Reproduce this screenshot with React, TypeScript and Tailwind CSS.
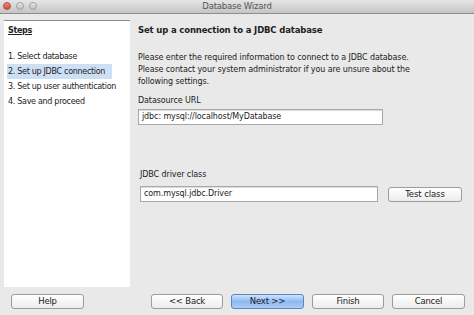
// Database Wizard dialog, Mac OS X style

import React from 'react'

const steps = [
  '1. Select database',
  '2. Set up JDBC connection',
  '3. Set up user authentication',
  '4. Save and proceed',
]

function MacButton({
  label,
  primary,
  className,
}: {
  label: string
  primary?: boolean
  className?: string
}) {
  return (
    <button
      className={
        'h-[15px] rounded-[3px] border text-[8.5px] leading-none text-[#222] ' +
        (primary
          ? 'border-[#5b86c4] bg-gradient-to-b from-[#cfe4fb] via-[#8dbaf0] to-[#a9cdf6] '
          : 'border-[#9c9c9c] bg-gradient-to-b from-[#ffffff] to-[#ececec] ') +
        (className ?? '')
      }
    >
      {label}
    </button>
  )
}

export default function App() {
  return (
    <div
      className="w-[474px] h-[315px] flex flex-col bg-[#e9e9e9] text-[#222] overflow-hidden"
      style={{ fontFamily: '"DejaVu Sans", Verdana, sans-serif' }}
    >
      {/* Title bar */}
      <div className="relative h-[14px] flex items-center justify-center bg-gradient-to-b from-[#e6e6e6] to-[#c4c4c4] border-b border-[#8e8e8e]">
        <div className="absolute left-[3px] top-[2px] flex gap-[5px]">
          <span className="w-[8px] h-[8px] rounded-full bg-gradient-to-b from-[#f08a80] to-[#d0453a] border border-[#b84a40]" />
          <span className="w-[8px] h-[8px] rounded-full bg-gradient-to-b from-[#e8e8e8] to-[#bdbdbd] border border-[#a0a0a0]" />
          <span className="w-[8px] h-[8px] rounded-full bg-gradient-to-b from-[#e8e8e8] to-[#bdbdbd] border border-[#a0a0a0]" />
        </div>
        <span className="text-[8.5px] text-[#555] tracking-[-0.2px]">Database Wizard</span>
      </div>

      {/* Body */}
      <div className="flex flex-1 pt-[6px]">
        {/* Steps panel */}
        <div className="ml-[4px] w-[126px] h-[267px] bg-white border-t border-[#8a8a8a] pl-[3px] pt-[4px] text-[8px] tracking-[-0.3px]">
          <div className="font-bold underline leading-[12px] mb-[12px] pl-[1px]">Steps</div>
          <div className="flex flex-col">
            {steps.map((s, i) => (
              <div
                key={i}
                className={
                  'h-[15px] leading-[15px] pl-[1px] ' +
                  (i === 1 ? 'bg-[#cddff4] w-[105px]' : '')
                }
              >
                {s}
              </div>
            ))}
          </div>
        </div>

        {/* Main content */}
        <div className="flex-1 pl-[8px] pt-[4px] pr-[10px] text-[8px] tracking-[-0.1px]">
          <div className="font-bold leading-[12px] text-[8.5px] tracking-[-0.15px]">Set up a connection to a JDBC database</div>
          <p className="mt-[16px] leading-[12px]">
            Please enter the required information to connect to a JDBC database.
            <br />
            Please contact your system administrator if you are unsure about the
            <br />
            following settings.
          </p>
          <div className="mt-[7px] leading-[12px]">Datasource URL</div>
          <div className="mt-[2px] w-[245px] h-[16px] bg-white border border-[#a8a8a8] shadow-[inset_0_1px_1px_rgba(0,0,0,0.15)] flex items-center pl-[3px]">
            jdbc: mysql://localhost/MyDatabase
          </div>
          <div className="mt-[44px] leading-[12px] pl-[2px]">JDBC driver class</div>
          <div className="mt-[5px] flex items-center gap-[10px] pl-[2px]">
            <div className="w-[238px] h-[16px] bg-white border border-[#a8a8a8] shadow-[inset_0_1px_1px_rgba(0,0,0,0.15)] flex items-center pl-[3px]">
              com.mysql.jdbc.Driver
            </div>
            <MacButton label="Test class" className="w-[74px]" />
          </div>
        </div>
      </div>

      {/* Footer buttons */}
      <div className="h-[28px] flex items-start pt-[7px] pl-[11px] tracking-[-0.2px]">
        <MacButton label="Help" className="w-[73px]" />
        <div className="ml-[67px] flex gap-[8px]">
          <MacButton label="<< Back" className="w-[72px]" />
          <MacButton label="Next >>" primary className="w-[73px]" />
          <MacButton label="Finish" className="w-[72px]" />
          <MacButton label="Cancel" className="w-[73px]" />
        </div>
      </div>
    </div>
  )
}
